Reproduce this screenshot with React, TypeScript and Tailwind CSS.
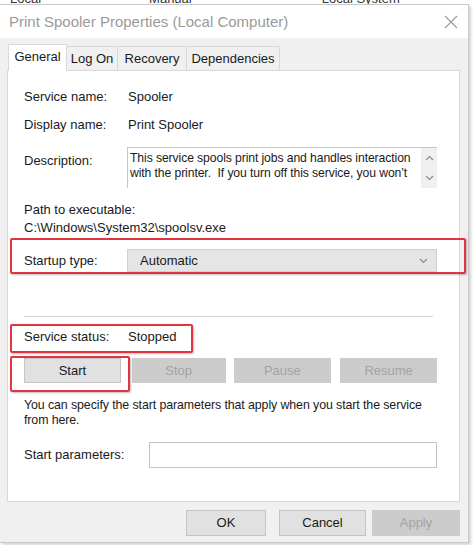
import React from 'react'

const font = { fontFamily: '"Liberation Sans", Arial, sans-serif' }

function RedBox({ className }: { className: string }) {
  return (
    <div
      className={`pointer-events-none absolute rounded-[2px] border-2 border-[#e0353f] shadow-[1px_1px_2px_rgba(0,0,0,0.25)] ${className}`}
    />
  )
}

function WinButton({
  label,
  disabled = false,
  className = '',
}: {
  label: string
  disabled?: boolean
  className?: string
}) {
  return (
    <div
      className={`flex items-center justify-center text-[13px] ${
        disabled
          ? 'bg-[#cccccc] text-[#a3a3a3] border border-[#cccccc]'
          : 'bg-[#e1e1e1] text-[#1a1a1a] border border-[#c4c4c4]'
      } ${className}`}
    >
      {label}
    </div>
  )
}

function Chevron({ up = false }: { up?: boolean }) {
  return (
    <svg width="9" height="6" viewBox="0 0 9 6" fill="none" stroke="#8c8c8c" strokeWidth={1.2}>
      <path d={up ? 'M1 5l3.5-3.5L8 5' : 'M1 1l3.5 3.5L8 1'} />
    </svg>
  )
}

export default function App() {
  return (
    <div className="relative h-[545px] w-[474px] overflow-hidden bg-white text-[#1a1a1a]" style={font}>
      {/* background list peeking above the dialog */}
      <div className="flex h-[4px] overflow-hidden text-[13px] leading-none text-[#333]">
        <span className="-mt-[8px] ml-[10px]">Local</span>
        <span className="-mt-[8px] ml-[108px]">Manual</span>
        <span className="-mt-[8px] ml-[130px]">Local System</span>
      </div>

      <div className="w-[469px] border-r border-b border-t border-[#c9c9c9] bg-[#f0f0f0] shadow-[2px_2px_3px_rgba(0,0,0,0.18)]">
        {/* title bar */}
        <div className="flex h-[33px] items-center justify-between bg-white pl-[9px] pr-[10px]">
          <span className="pt-[2px] text-[15px] text-[#9a9a9a]">Print Spooler Properties (Local Computer)</span>
          <svg width="14" height="14" viewBox="0 0 14 14" stroke="#9a9a9a" strokeWidth={1.1}>
            <path d="M1 1l12 12M13 1L1 13" />
          </svg>
        </div>

        <div className="px-[7px] pt-[6px]">
          {/* tabs */}
          <div className="flex h-[26px] items-end pl-[1px] text-[13px]">
            <div className="relative z-10 -mb-px flex h-[27px] w-[59px] items-center justify-center border border-b-0 border-[#d9d9d9] bg-white pb-[3px]">
              General
            </div>
            <div className="flex h-[24px] w-[51px] items-center justify-center border-t border-r border-[#d9d9d9]">Log On</div>
            <div className="flex h-[24px] w-[69px] items-center justify-center border-t border-r border-[#d9d9d9]">Recovery</div>
            <div className="flex h-[24px] w-[93px] items-center justify-center border-t border-r border-[#d9d9d9]">Dependencies</div>
          </div>

          {/* panel */}
          <div className="relative w-[453px] border border-[#d9d9d9] bg-white pl-[16px] pr-[22px] pt-[17px] pb-[33px] text-[13px]">
            <div className="flex h-[18px] items-center">
              <span className="w-[104px]">Service name:</span>
              <span>Spooler</span>
            </div>
            <div className="mt-[10px] flex h-[18px] items-center">
              <span className="w-[104px]">Display name:</span>
              <span>Print Spooler</span>
            </div>
            <div className="mt-[13px] flex h-[41px] items-start">
              <span className="mt-[4px] w-[103px]">Description:</span>
              <div className="flex h-[41px] w-[310px] border border-[#c7c7c7] border-b-0 border-r-0">
                <div className="flex-1 overflow-hidden whitespace-nowrap pl-[2px] pt-[3px] text-[12.2px] leading-[15px] tracking-[-0.1px]">
                  <div>This service spools print jobs and handles interaction</div>
                  <div>with the printer.&nbsp; If you turn off this service, you won’t</div>
                </div>
                <div className="flex w-[16px] flex-col items-center justify-between bg-[#f0f0f0] py-[7px]">
                  <Chevron up />
                  <Chevron />
                </div>
              </div>
            </div>
            <div className="mt-[13px] flex h-[18px] items-center">Path to executable:</div>
            <div className="flex h-[18px] items-center">C:\Windows\System32\spoolsv.exe</div>

            <div className="mt-[12px] flex h-[23px] items-center">
              <span className="w-[103px]">Startup type:</span>
              <div className="flex h-[23px] w-[310px] items-center justify-between border border-[#d0d0d0] bg-[#e5e5e5] pl-[12px] pr-[8px]">
                <span>Automatic</span>
                <Chevron />
              </div>
            </div>

            <div className="mt-[44px] h-px w-[409px] bg-[#d4d4d4]" />

            <div className="mt-[11px] flex h-[18px] items-center">
              <span className="w-[104px]">Service status:</span>
              <span>Stopped</span>
            </div>

            <div className="mt-[12px] flex h-[25px] gap-[8px]">
              <WinButton label="Start" className="w-[97px]" />
              <WinButton label="Stop" disabled className="ml-[3px] w-[94px]" />
              <WinButton label="Pause" disabled className="w-[98px]" />
              <WinButton label="Resume" disabled className="ml-[1px] w-[97px]" />
            </div>

            <div className="mt-[15px] whitespace-nowrap text-[12.4px] leading-[15px] tracking-[-0.1px]">
              <div>You can specify the start parameters that apply when you start the service</div>
              <div>from here.</div>
            </div>

            <div className="mt-[14px] flex h-[26px] items-center">
              <span className="w-[125px]">Start parameters:</span>
              <div className="h-[26px] w-[288px] border border-[#c4c4c4] bg-white" />
            </div>

            <RedBox className="left-[2px] top-[167px] h-[36px] w-[456px]" />
            <RedBox className="left-[2px] top-[253px] h-[29px] w-[183px]" />
            <RedBox className="left-[2px] top-[285px] h-[36px] w-[120px]" />
          </div>

          {/* footer buttons */}
          <div className="flex h-[40px] justify-end gap-[13px] pt-[8px] pr-[1px]">
            <WinButton label="OK" className="h-[26px] w-[80px]" />
            <WinButton label="Cancel" className="h-[26px] w-[87px]" />
            <WinButton label="Apply" disabled className="-ml-[7px] h-[26px] w-[88px]" />
          </div>
        </div>
      </div>
    </div>
  )
}
